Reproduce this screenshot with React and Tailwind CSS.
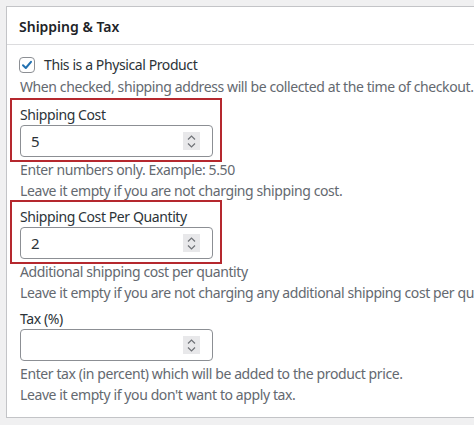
import React from 'react';

const Spinner = () => (
  <div className="absolute right-[12px] top-1/2 -translate-y-1/2 w-[17px] h-[18px] bg-[#e8e8ea] flex flex-col items-center justify-center gap-[3px]">
    <svg width="9" height="5" viewBox="0 0 9 5" fill="none">
      <path d="M1 4.5 L4.5 1 L8 4.5" stroke="#6f7277" strokeWidth="1.2" />
    </svg>
    <svg width="9" height="5" viewBox="0 0 9 5" fill="none">
      <path d="M1 0.5 L4.5 4 L8 0.5" stroke="#6f7277" strokeWidth="1.2" />
    </svg>
  </div>
);

const Field = ({ label, value, lines, marked, first }) => (
  <div className={first ? 'mt-[8px]' : 'mt-[6px]'}>
    <div className="relative w-[193px]">
      {marked && (
        <div className="absolute -top-[7px] -bottom-[5px] -left-[10px] -right-[9px] border-2 border-[#b5282e] pointer-events-none" />
      )}
      <label className="block leading-[20px] text-[#2c3338]">{label}</label>
      <div className="relative h-[32px] w-[193px] rounded-[4px] border border-[#8c8f94] bg-white">
        <span className="absolute left-[10px] top-1/2 -translate-y-1/2 text-[15px] text-[#2c3338]">{value}</span>
        <Spinner />
      </div>
    </div>
    <div className="mt-[2px] text-[#646970] leading-[21px]">
      {lines.map((l) => (
        <p key={l} className="whitespace-nowrap">{l}</p>
      ))}
    </div>
  </div>
);

export default function App() {
  return (
    <div className="min-h-[425px] bg-[#f0f0f1] pt-[6px] pl-[6px] overflow-hidden" style={{ fontFamily: '"Noto Sans", sans-serif' }}>
      <div className="h-[412px] bg-white border border-r-0 border-[#c3c4c7] text-[14px]">
        <div className="h-[38px] flex items-center pl-[12px] pt-[1px] border-b border-[#dcdcde] text-[#1d2327] font-semibold">
          Shipping &amp; Tax
        </div>
        <div className="pl-[13px] pt-[9px] tracking-[-0.4px]">
          <div className="flex items-center leading-[21px] -ml-[1px]">
            <span className="w-[16px] h-[16px] rounded-[4px] border border-[#8c8f94] flex items-center justify-center">
              <svg width="12" height="12" viewBox="0 0 12 12" fill="none">
                <path d="M2 6.3 L4.8 9 L10 2.8" stroke="#2271b1" strokeWidth="2" strokeLinecap="round" strokeLinejoin="round" />
              </svg>
            </span>
            <span className="ml-[9px] text-[#2c3338]">This is a Physical Product</span>
          </div>
          <p className="mt-[1px] leading-[21px] text-[#646970] whitespace-nowrap">
            When checked, shipping address will be collected at the time of checkout.
          </p>
          <Field
            first
            marked
            label="Shipping Cost"
            value="5"
            lines={['Enter numbers only. Example: 5.50', 'Leave it empty if you are not charging shipping cost.']}
          />
          <Field
            marked
            label="Shipping Cost Per Quantity"
            value="2"
            lines={['Additional shipping cost per quantity', 'Leave it empty if you are not charging any additional shipping cost per quantity.']}
          />
          <Field
            label="Tax (%)"
            value=""
            lines={['Enter tax (in percent) which will be added to the product price.', "Leave it empty if you don't want to apply tax."]}
          />
        </div>
      </div>
    </div>
  );
}
